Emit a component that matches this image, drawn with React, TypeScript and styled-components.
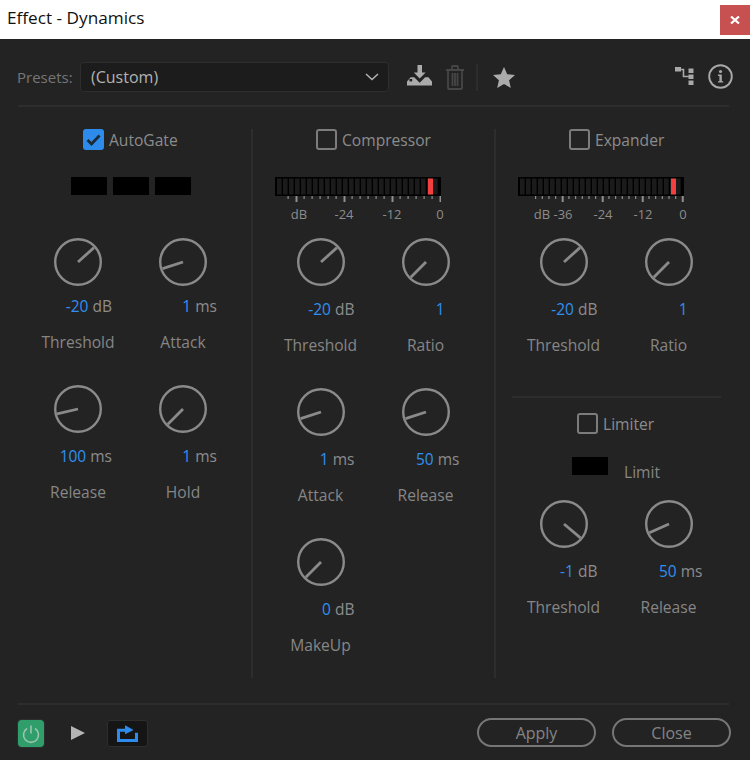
import React from "react";
import styled, { createGlobalStyle } from "styled-components";

const Global = createGlobalStyle`
  html, body { margin: 0; padding: 0; background: #232323; }
  body { font-family: "Open Sans", "Noto Sans", sans-serif; }
`;

const Win = styled.div`
  width: 750px; height: 760px; display: flex; flex-direction: column;
  background: #232323; overflow: hidden;
`;
const TitleBar = styled.div`
  height: 39px; background: #fff; display: flex; align-items: flex-start; justify-content: space-between;
  flex: none;
`;
const TitleText = styled.span`
  font-size: 17.2px; line-height: 36px; color: #111; margin-left: 7px;
`;
const CloseX = styled.div`
  width: 30px; height: 30px; margin-top: 5px; background: #c75050; display: flex; align-items: center; justify-content: center;
`;
const Body = styled.div`
  flex: 1; display: flex; flex-direction: column; padding: 0 21px 0 18px;
`;
const PresetRow = styled.div`
  height: 66px; flex: none; box-sizing: content-box; border-bottom: 2px solid #2d2d2d; display: flex; align-items: flex-start;
  margin-bottom: 22px;
`;
const PresetLabel = styled.span`
  font-size: 15px; line-height: 30px; margin-top: 23px; color: #767676; width: 63px; margin-left: -1px;
`;
const SelectBox = styled.div`
  width: 309px; height: 30px; margin-top: 23px; box-sizing: border-box; background: #1c1c1c; border: 1px solid #2e2e2e; border-radius: 4px;
  display: flex; align-items: center; justify-content: space-between; padding: 0 9px 0 10px; color: #b3b3b3; font-size: 16px;
`;
const ToolIcons = styled.div`
  display: flex; align-items: center; margin: 25px 0 0 18px;
`;
const ToolDivider = styled.div`
  width: 2px; height: 27px; background: #2d2d2d; margin: 0 15px 0 11px;
`;
const RightIcons = styled.div`
  margin: 25px -4px 0 auto; display: flex; align-items: center; gap: 14px;
`;
const Columns = styled.div`
  height: 549px; flex: none; display: flex;
`;
const Column = styled.div<{ $w: number; $divider?: boolean }>`
  width: ${(p) => p.$w}px; flex: none; box-sizing: border-box;
  border-right: ${(p) => (p.$divider ? "2px solid #2d2d2d" : "none")};
`;
const Header = styled.div<{ $left: number }>`
  display: flex; align-items: center; gap: 5px; height: 21px; line-height: 20px; margin-left: ${(p) => p.$left}px;
  color: #8c8c8c; font-size: 15.6px;
`;
const Box = styled.div<{ $on?: boolean }>`
  width: 21px; height: 21px; box-sizing: border-box; border-radius: 3px; display: flex; align-items: center; justify-content: center;
  background: ${(p) => (p.$on ? "#2d8ceb" : "transparent")};
  border: ${(p) => (p.$on ? "none" : "2px solid #7c7c7c")};
`;
const GateRow = styled.div`
  display: flex; gap: 6px; margin: 27px 0 43px 53px;
`;
const Black = styled.div`
  width: 36px; height: 18px; background: #000;
`;
const MeterWrap = styled.div`
  margin: 27px 0 16px 22px; width: 166px;
`;
const ScaleRow = styled.div`
  display: flex; height: 16px; margin-top: 4px; font-size: 13px; line-height: 16px; color: #8c8c8c;
`;
const ScaleLabel = styled.span<{ $w: number; $ml?: number }>`
  width: ${(p) => p.$w}px; flex: none; text-align: center; margin-left: ${(p) => p.$ml ?? 0}px;
`;
const KnobGrid = styled.div<{ $left: number }>`
  display: grid; grid-template-columns: 105px 105px; row-gap: 33px; margin-left: ${(p) => p.$left}px;
`;
const Cell = styled.div`
  width: 105px; display: flex; flex-direction: column; align-items: center;
`;
const KnobSvg = styled.svg`
  display: block; width: 48px; height: 48px;
`;
const ValueLine = styled.div<{ $gap: number; $bare?: boolean }>`
  align-self: stretch; margin-top: ${(p) => p.$gap}px; height: 20px; line-height: 20px; text-align: right;
  padding-right: ${(p) => (p.$bare ? 33.5 : 18.5)}px; font-size: 15.5px; color: #8c8c8c; white-space: pre;
`;
const Num = styled.span`
  color: #2f90f0;
`;
const CellLabel = styled.div`
  margin-top: 16px; height: 20px; line-height: 20px; font-size: 15.6px; color: #868686;
`;
const Rule = styled.div`
  height: 2px; background: #2d2d2d; margin: 41px 8px 15px 16px;
`;
const LimitRow = styled.div`
  display: flex; margin: 23px 0 18px 76px; align-items: flex-start;
`;
const LimitText = styled.span`
  margin: 5px 0 0 16px; line-height: 20px; font-size: 15.6px; color: #868686;
`;
const Footer = styled.div`
  margin-top: 25px; border-top: 2px solid #2d2d2d; padding-top: 15px; display: flex; align-items: flex-start;
`;
const PowerBtn = styled.div`
  width: 26px; height: 27px; background: #2f9e6b; border-radius: 3px; outline: 1px solid #2e2e2e; display: flex; align-items: center; justify-content: center;
`;
const PlayWrap = styled.div`
  margin: 6px 22px 0 27px; display: flex;
`;
const LoopBtn = styled.div`
  width: 41px; height: 27px; box-sizing: border-box; background: #151515; border: 1px solid #2e2e2e; border-radius: 3px; display: flex; align-items: center; justify-content: center;
`;
const Actions = styled.div`
  margin: -2px -2px 0 auto; display: flex; gap: 16px;
`;
const ActionBtn = styled.div`
  width: 119px; height: 29px; box-sizing: border-box; border: 2px solid #767676; border-radius: 15px; color: #858585; font-size: 16px;
  display: flex; align-items: center; justify-content: center;
`;

const Knob = ({ angle }: { angle: number }) => (
  <KnobSvg viewBox="0 0 48 48">
    <circle cx="24" cy="24" r="22.8" fill="none" stroke="#8a8a8a" strokeWidth="2.4" />
    <line x1="24" y1="24" x2="24" y2="2.5" stroke="#8a8a8a" strokeWidth="2.8" transform={`rotate(${angle} 24 24)`} />
  </KnobSvg>
);

const KnobCell = ({ angle, num, unit, label, gap }: { angle: number; num: string; unit?: string; label: string; gap: number }) => (
  <Cell>
    <Knob angle={angle} />
    <ValueLine $gap={gap} $bare={!unit}>
      <Num>{num}</Num>
      {unit ? ` ${unit}` : ""}
    </ValueLine>
    <CellLabel>{label}</CellLabel>
  </Cell>
);

const Meter = ({ redX, tickStart, tickStep, majorEvery, majorOffset }: { redX: number; tickStart: number; tickStep: number; majorEvery: number; majorOffset: number }) => {
  const cells = Array.from({ length: 27 }, (_, i) => i);
  const ticks: number[] = [];
  for (let x = tickStart; x <= 165; x += tickStep) ticks.push(x);
  return (
    <svg width="166" height="25" viewBox="0 0 166 25" style={{ display: "block" }}>
      <rect x="0" y="0" width="166" height="19" fill="#000" />
      {cells.map((i) => (
        <rect key={i} x={2 + i * 6} y="1.5" width="4.6" height="16" fill="#1b1b1b" />
      ))}
      <rect x={redX} y="1.5" width="5" height="16" fill="#f24040" />
      {ticks.map((x, i) => (
        <rect key={x} x={x} y="19" width={(i + majorOffset) % majorEvery === 0 ? 2 : 1.2} height={(i + majorOffset) % majorEvery === 0 ? 6 : 3} fill="#8f8f8f" />
      ))}
    </svg>
  );
};

export default function App() {
  return (
    <Win>
      <Global />
      <TitleBar>
        <TitleText>Effect - Dynamics</TitleText>
        <CloseX>
          <svg width="10" height="8" viewBox="0 0 10 8"><path d="M1 0.5 L9 7.5 M9 0.5 L1 7.5" stroke="#fff" strokeWidth="2.2" /></svg>
        </CloseX>
      </TitleBar>
      <Body>
        <PresetRow>
          <PresetLabel>Presets:</PresetLabel>
          <SelectBox>
            <span>(Custom)</span>
            <svg width="14" height="8" viewBox="0 0 14 8"><path d="M1 1 L7 6.5 L13 1" fill="none" stroke="#b3b3b3" strokeWidth="1.5" /></svg>
          </SelectBox>
          <ToolIcons>
            <svg width="25" height="21" viewBox="0 0 25 21" style={{ marginRight: 13, alignSelf: "flex-start", marginTop: 1 }}>
              <path d="M10.5 0 H15 V7.5 H18.6 L12.7 13.6 L6.8 7.5 H10.5 Z" fill="#ababab" />
              <path d="M3.6 12.3 H7.2 L12.7 17.8 L18.2 12.3 H21.4 L25 16.5 V20.5 H0 V16.5 Z" fill="#ababab" />
              <rect x="2.4" y="14" width="2.8" height="2.4" fill="#232323" />
            </svg>
            <svg width="20" height="25" viewBox="0 0 20 25">
              <path d="M1 5 H19 M7 5 V2 Q7 1 8 1 H12 Q13 1 13 2 V5 M3 5 V23 Q3 24 4 24 H16 Q17 24 17 23 V5 M7.5 8 V21 M10 8 V21 M12.5 8 V21" fill="none" stroke="#464646" strokeWidth="1.8" />
            </svg>
            <ToolDivider />
            <svg width="22" height="21" viewBox="0 0 22 21">
              <path d="M11 0 L14.2 7.2 L22 8 L16.1 13.2 L17.8 21 L11 17 L4.2 21 L5.9 13.2 L0 8 L7.8 7.2 Z" fill="#ababab" />
            </svg>
          </ToolIcons>
          <RightIcons>
            <svg width="19" height="19" viewBox="0 0 19 19">
              <rect x="0" y="0" width="6" height="4.5" fill="#a8a8a8" />
              <path d="M6 2.5 H8.5 V9.5 H14" fill="none" stroke="#a8a8a8" strokeWidth="1.6" />
              <rect x="13.5" y="1.5" width="5" height="4.5" fill="#a8a8a8" />
              <rect x="13.5" y="7.5" width="5" height="4.5" fill="#a8a8a8" />
              <rect x="13.5" y="13.5" width="5" height="4.5" fill="#a8a8a8" />
            </svg>
            <svg width="25" height="25" viewBox="0 0 25 25">
              <circle cx="12.5" cy="12.5" r="11.3" fill="none" stroke="#a8a8a8" strokeWidth="1.9" />
              <circle cx="12.5" cy="7.5" r="1.6" fill="#a8a8a8" />
              <path d="M10 10.5 H13.8 V17.2 H15.2 V18.6 H10 V17.2 H11.4 V11.9 H10 Z" fill="#a8a8a8" />
            </svg>
          </RightIcons>
        </PresetRow>
        <Columns>
          <Column $w={235} $divider>
            <Header $left={65}>
              <Box $on>
                <svg width="15" height="12" viewBox="0 0 15 12"><path d="M1.5 6 L5.5 10 L13.5 1.5" fill="none" stroke="#1c2a38" strokeWidth="2.8" /></svg>
              </Box>
              AutoGate
            </Header>
            <GateRow>
              <Black />
              <Black />
              <Black />
            </GateRow>
            <KnobGrid $left={7.5}>
              <KnobCell angle={48} num="-20" unit="dB" label="Threshold" gap={10} />
              <KnobCell angle={-108} num="1" unit="ms" label="Attack" gap={10} />
              <KnobCell angle={-103} num="100" unit="ms" label="Release" gap={13} />
              <KnobCell angle={-135} num="1" unit="ms" label="Hold" gap={13} />
            </KnobGrid>
          </Column>
          <Column $w={243} $divider>
            <Header $left={63}>
              <Box />
              Compressor
            </Header>
            <MeterWrap>
              <Meter redX={153} tickStart={12.5} tickStep={8} majorEvery={6} majorOffset={5} />
              <ScaleRow>
                <ScaleLabel $w={48}>dB</ScaleLabel>
                <ScaleLabel $w={42}>-24</ScaleLabel>
                <ScaleLabel $w={54}>-12</ScaleLabel>
                <ScaleLabel $w={42}>0</ScaleLabel>
              </ScaleRow>
            </MeterWrap>
            <KnobGrid $left={15}>
              <KnobCell angle={48} num="-20" unit="dB" label="Threshold" gap={13} />
              <KnobCell angle={-135} num="1" label="Ratio" gap={13} />
              <KnobCell angle={-108} num="1" unit="ms" label="Attack" gap={13} />
              <KnobCell angle={-108} num="50" unit="ms" label="Release" gap={13} />
              <KnobCell angle={-135} num="0" unit="dB" label="MakeUp" gap={13} />
            </KnobGrid>
          </Column>
          <Column $w={233}>
            <Header $left={73}>
              <Box />
              Expander
            </Header>
            <MeterWrap>
              <Meter redX={153} tickStart={17} tickStep={6.67} majorEvery={6} majorOffset={2} />
              <ScaleRow>
                <ScaleLabel $w={48}>dB</ScaleLabel>
                <ScaleLabel $w={40} $ml={-23}>-36</ScaleLabel>
                <ScaleLabel $w={40}>-24</ScaleLabel>
                <ScaleLabel $w={40}>-12</ScaleLabel>
                <ScaleLabel $w={40}>0</ScaleLabel>
              </ScaleRow>
            </MeterWrap>
            <KnobGrid $left={15}>
              <KnobCell angle={48} num="-20" unit="dB" label="Threshold" gap={13} />
              <KnobCell angle={-135} num="1" label="Ratio" gap={13} />
            </KnobGrid>
            <Rule />
            <Header $left={81}>
              <Box />
              Limiter
            </Header>
            <LimitRow>
              <Black />
              <LimitText>Limit</LimitText>
            </LimitRow>
            <KnobGrid $left={15}>
              <KnobCell angle={130} num="-1" unit="dB" label="Threshold" gap={13} />
              <KnobCell angle={-114} num="50" unit="ms" label="Release" gap={13} />
            </KnobGrid>
          </Column>
        </Columns>
        <Footer>
          <PowerBtn>
            <svg width="20" height="20" viewBox="0 0 20 20">
              <path d="M6 4.5 A7.5 7.5 0 1 0 14 4.5 M10 1.5 V9.5" fill="none" stroke="#9cc4ae" strokeWidth="1.6" />
            </svg>
          </PowerBtn>
          <PlayWrap>
            <svg width="14" height="14" viewBox="0 0 14 14"><path d="M0 0 L14 7 L0 14 Z" fill="#b5b5b5" /></svg>
          </PlayWrap>
          <LoopBtn>
            <svg width="21" height="17" viewBox="0 0 21 17">
              <path d="M0 3.7 H8 V0.3 L16.6 5 L8 9.3 V6.7 H3 V14 H18 V7.7 H21 V17 H0 Z" fill="#2d8ceb" />
            </svg>
          </LoopBtn>
          <Actions>
            <ActionBtn>Apply</ActionBtn>
            <ActionBtn>Close</ActionBtn>
          </Actions>
        </Footer>
      </Body>
    </Win>
  );
}
